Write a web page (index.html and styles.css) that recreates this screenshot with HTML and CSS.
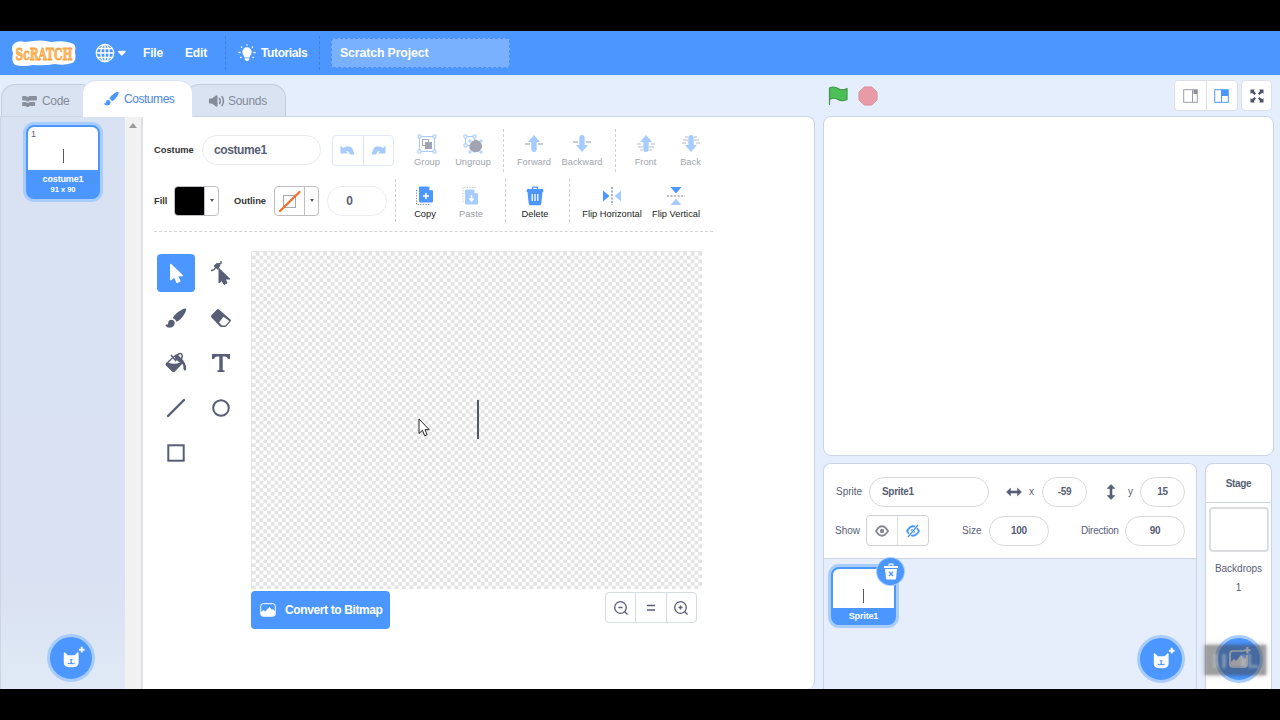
FILE: index.html
```html
<!DOCTYPE html>
<html lang="en">
<head>
<meta charset="utf-8">
<title>Scratch Project</title>
<link rel="stylesheet" href="styles.css">
</head>
<body>
<svg class="defs" width="0" height="0">
  <symbol id="cat" viewBox="0 0 28 28">
    <path fill="#fff" d="M6.800 9.300Q6.800 7.800 8 8.600L10.800 11.300H17.600L20.400 8.600Q21.600 7.800 21.600 9.300V18.500C21.600 21.800 19 23.300 14.200 23.300S6.800 21.800 6.800 18.500ZM23.800 2.800H25.700V4.800H27.600V6.700H25.700V8.600H23.800V6.700H21.900V4.800H23.800Z"/>
    <path d="M12.400 15.200H16L14.200 17Z" fill="#4c97ff"/>
    <path d="M14.200 16V18.500M10.700 18.800C11.700 20.200 13.700 20 14.200 18.500C14.700 20 16.700 20.200 17.700 18.800" fill="none" stroke="#4c97ff" stroke-width="1.100"/>
  </symbol>
  <symbol id="brush" viewBox="0 0 20 20">
    <path d="M19.300.7C20.400 1.800 18.600 5.400 15.900 8.700C14 11 11.600 12.800 10.300 13.100C9.900 11.400 8.600 10.100 7 9.700C7.400 8.200 9.500 5.800 12 3.900C15.200 1.500 18.400-.1 19.300.7ZM5.600 11.200C7.400 11.200 8.800 12.500 8.800 14.300C8.800 16.900 6.700 18.700 4 18.700C2.400 18.700.8 17.900.2 16.800C-.1 16.100.4 15.700 1 15.800C2 16 2.300 15.300 2.500 14.200C2.800 12.400 3.900 11.200 5.600 11.200Z"/>
  </symbol>
  <symbol id="pointer" viewBox="0 0 14 20"><path d="M1.500 1.500V16L5 13L7.500 18.500L10.200 17.200L7.900 12H12.500Z" stroke-width="1.300" stroke-linejoin="round"/></symbol>
</svg>
<div class="app">
  <header class="menu">
    <svg class="logo" width="66" height="28" viewBox="0 0 66 28">
      <path d="M4 4Q8 1 14 3Q31 0 40 3Q53 1 60 4Q66 5 64 13Q66 22 61 24Q53 27 44 25Q33 27 22 26Q12 28 4 26Q0 23 2 14Q-1 7 4 4Z" fill="#fff"/>
      <text class="logo-text" x="4.500" y="20.500" textLength="57" lengthAdjust="spacingAndGlyphs">ScRATCH</text>
    </svg>
    <svg class="globe" width="31" height="20" viewBox="0 0 31 20" fill="none" stroke="#fff" stroke-width="1.300"><circle cx="10" cy="10" r="8.700"/><ellipse cx="10" cy="10" rx="4.200" ry="8.700"/><path d="M10 1.500V18.500M1.500 10H18.500M3 5.500H17M3 14.500H17"/><path d="M23.500 8.500H30L26.800 12Z" fill="#fff" stroke-linejoin="round"/></svg>
    <span class="m-file">File</span><span class="m-edit">Edit</span>
    <div class="tutorials">
      <svg width="18" height="18" viewBox="0 0 18 18"><path fill="#fff" d="M9 3.300A4.700 4.700 0 0 1 13.700 8C13.700 10.200 12 11 11.500 13.500H6.500C6 11 4.300 10.200 4.300 8A4.700 4.700 0 0 1 9 3.300ZM6.700 14.200H11.300V15.600L10 17H8L6.700 15.600Z"/><path stroke="#fff" stroke-width="1.400" stroke-linecap="round" d="M9 .8V1M3.500 3L3.700 3.200M14.500 3L14.300 3.200M1 8.500H2M16 8.500H17M2.700 13.500L3 13.300M15.300 13.500L15 13.300"/></svg>
      <span>Tutorials</span>
    </div>
    <div class="project">Scratch Project</div>
  </header>

  <main class="body">
    <section class="left">
      <nav class="tabs">
        <div class="tab t-code"><svg width="16" height="12" viewBox="0 0 17 13"><path fill="#8a8f9c" d="M1 1H4L5 2H7L8 1H15Q16 1 16 2V5Q16 6 15 6H8L7 7H5L4 6H1Q0 6 0 5V2Q0 1 1 1ZM1 7.500H4L5 8.500H7L8 7.500H13Q14 7.500 14 8.500V11Q14 12 13 12H8L7 13H5L4 12H1Q0 12 0 11V8.500Q0 7.500 1 7.500Z"/></svg>Code</div>
        <div class="tab t-cost"><svg width="15" height="16" fill="#4c97ff"><use href="#brush"/></svg>Costumes</div>
        <div class="tab t-snd"><svg width="16" height="14" viewBox="0 0 16 14"><path fill="#858b98" d="M0 5Q0 4.500 1 4.500H3L7 1.500Q8.500.8 8.500 2.500V11.500Q8.500 13.200 7 12.500L3 9.500H1Q0 9.500 0 9Z"/><path d="M10.500 4.500Q12 7 10.500 9.500M13 2.500Q16 7 13 11.500" fill="none" stroke="#858b98" stroke-width="1.500" stroke-linecap="round"/></svg>Sounds</div>
      </nav>
      <div class="panel">
        <aside class="list">
          <div class="thumb costume-thumb"><div class="pic"><span class="num">1</span><i class="stroke"></i></div><b>costume1</b><small>91 x 90</small></div>
          <div class="fab"><svg width="28" height="28"><use href="#cat"/></svg></div>
        </aside>
        <div class="scroll"><i></i></div>
        <div class="editor">
          <div class="row row1">
            <span class="lbl">Costume</span>
            <div class="pill name">costume1</div>
            <div class="pair undo">
              <span><svg width="15" height="12" viewBox="0 0 15 12" fill="#a6cbff"><path d="M.5 1.500L3 4Q9 .5 12.500 4.500L14.500 10.500H9.500Q9.500 7 6 7L8 9.500H.5Z"/></svg></span>
              <span><svg width="15" height="12" viewBox="0 0 15 12" fill="#a6cbff"><path d="M14.500 1.500L12 4Q6 .5 2.500 4.500L.5 10.500H5.500Q5.500 7 9 7L7 9.500H14.500Z"/></svg></span>
            </div>
            <div class="tool off c-group"><svg width="20" height="20" viewBox="0 0 20 20" fill="#fff" stroke="#a6cbff"><rect x="2.500" y="2.500" width="15" height="15"/><path d="M1 1H4V4H1ZM16 1H19V4H16ZM1 16H4V19H1ZM16 16H19V19H16Z"/><rect x="5.500" y="5.500" width="6" height="6" stroke="#aaadb8"/><rect x="8.500" y="8.500" width="6" height="6" fill="#a0a3b1" stroke="#a0a3b1"/></svg>Group</div>
            <div class="tool off"><svg width="20" height="20" viewBox="0 0 20 20" fill="#fff" stroke="#a6cbff"><rect x="2.500" y="2.500" width="9" height="9"/><path d="M1 1H4V4H1ZM10 1H13V4H10ZM1 10H4V13H1Z"/><path d="M9 8L13 6L17 8L19 13L16 17L11 18L7 15L7 11Z" fill="#a0a3b1" stroke="#a0a3b1"/><path d="M6 6H8V8H6ZM17 6H19V8H17ZM6 17H8V19H6ZM17 17H19V19H17Z"/></svg>Ungroup</div>
            <i class="vline"></i>
            <div class="tool off c-fwd"><svg width="20" height="20" viewBox="0 0 20 20"><path d="M1 10H6M14 10H19" stroke="#b8bac4" stroke-width="1.400"/><path fill="#a6cbff" d="M10 1L16 8H12.700V15Q12.700 18 10 18T7.300 15V8H4Z"/></svg>Forward</div>
            <div class="tool off"><svg width="20" height="20" viewBox="0 0 20 20"><path d="M1 8H6M14 8H19" stroke="#b8bac4" stroke-width="1.400"/><path fill="#a6cbff" d="M10 18L16 11H12.700V4Q12.700 1 10 1T7.300 4V11H4Z"/></svg>Backward</div>
            <i class="vline v2"></i>
            <div class="tool off c-front"><svg width="20" height="20" viewBox="0 0 20 20"><path d="M1 10H5M15 10H19M2 13H7M13 13H18M4 16H7M13 16H16" stroke="#b8bac4"/><path fill="#a6cbff" d="M10 1L16 8H12.700V15Q12.700 18 10 18T7.300 15V8H4Z"/></svg>Front</div>
            <div class="tool off"><svg width="20" height="20" viewBox="0 0 20 20"><path d="M1 9H5M15 9H19M2 6H7M13 6H18M4 3H7M13 3H16" stroke="#b8bac4"/><path fill="#a6cbff" d="M10 18L16 11H12.700V4Q12.700 1 10 1T7.300 4V11H4Z"/></svg>Back</div>
          </div>
          <div class="row row2">
            <span class="lbl">Fill</span>
            <div class="swatch"><span class="color black"></span><span class="drop"></span></div>
            <span class="lbl outl">Outline</span>
            <div class="swatch"><span class="color"><svg width="29" height="28" viewBox="0 0 29 28"><rect x="8.500" y="8.500" width="12" height="12" fill="none" stroke="#a7a9b0"/><path d="M5 24L24.500 5" stroke="#f0702e" stroke-width="2.400" stroke-linecap="round"/></svg></span><span class="drop"></span></div>
            <div class="pill width">0</div>
            <i class="vline va"></i>
            <div class="tool c-copy"><svg width="20" height="20" viewBox="0 0 20 20"><path d="M1.500 4V18.500H16" fill="none" stroke="#8a94a8" stroke-dasharray="1.300 1.300"/><path fill="#4c97ff" d="M5 .5H13L18 5.500V15Q18 16.500 16.500 16.500H5.500Q4 16.500 4 15V1.500Q4 .5 5 .5Z"/><path d="M14 .5V4.500H18" fill="#fff" stroke="#4c97ff" stroke-width=".7"/><path stroke="#fff" stroke-width="1.600" d="M11 7V13M8 10H14"/></svg>Copy</div>
            <div class="tool off"><svg width="20" height="20" viewBox="0 0 20 20"><path d="M2 16V1.500H16" fill="none" stroke="#c4cad6" stroke-dasharray="1.300 1.300"/><path fill="#a6cbff" d="M5.500 3.500H12.500L17 8V17.500Q17 18.500 16 18.500H5Q4 18.500 4 17.500V4.500Q4 3.500 5.500 3.500Z"/><path d="M13 3.500V7.500H17" fill="#fff" stroke="#a6cbff" stroke-width=".7"/><path stroke="#fff" stroke-width="1.500" fill="none" d="M10.500 9V14.500M8.500 12.500L10.500 15L12.500 12.500"/></svg>Paste</div>
            <i class="vline vb"></i>
            <div class="tool c-del"><svg width="20" height="20" viewBox="0 0 20 20"><path fill="#4c97ff" d="M7 3V1.500Q7 .5 8 .5H12Q13 .5 13 1.500V3H17Q18.300 3 18.300 4V6H17.500L16.300 17.500Q16.200 19.300 14.800 19.300H5.200Q3.800 19.300 3.700 17.500L2.500 6H1.700V4Q1.700 3 3 3ZM8.300 3H11.700V1.800H8.300Z"/><path d="M7.200 8V15M10 8V15M12.800 8V15" stroke="#fff" stroke-width="1.300"/></svg>Delete</div>
            <i class="vline vc"></i>
            <div class="tool c-fh"><svg width="20" height="20" viewBox="0 0 20 20"><path fill="#4c97ff" d="M1 4.500V15.500L7.500 10Z"/><path fill="#a6cbff" d="M19 4.500V15.500L12.500 10Z"/><path d="M10 1V19" stroke="#777c8a" stroke-width="1.200" stroke-dasharray="2 1.500"/></svg>Flip Horizontal</div>
            <div class="tool c-fv"><svg width="20" height="20" viewBox="0 0 20 20"><path fill="#4c97ff" d="M4.500 1H15.500L10 7.500Z"/><path fill="#a6cbff" d="M4.500 19H15.500L10 12.500Z"/><path d="M1 10H19" stroke="#777c8a" stroke-width="1.200" stroke-dasharray="2 1.500"/></svg>Flip Vertical</div>
          </div>
          <div class="work">
            <div class="tools">
              <span class="on"><svg width="15" height="21" fill="#fff" stroke="#fff"><use href="#pointer"/></svg></span>
              <span><svg width="22" height="26" viewBox="0 0 22 26"><path d="M1 10.500Q4.500 10.500 5.500 7.500Q7 3.500 11 3.500V1" fill="none" stroke="#575e75" stroke-width="1.300"/><path d="M3.500 6L7 2.800L10.500 5L8 10Z" fill="#575e75"/><path d="M9 8.500V23L12 20.500L14 24.500L17 23L15.200 19H19.800Z" fill="#575e75" stroke="#575e75" stroke-linejoin="round"/></svg></span>
              <span><svg width="22" height="21"><use href="#brush"/></svg></span>
              <span><svg width="22" height="20" viewBox="0 0 22 20"><path d="M1.500 7L7 1.500Q8 .7 9 1.500L20.500 11.500Q21.500 12.500 20.500 13.500L16.500 18.300Q16 19 15 19H11.500Q10.500 19 9.500 18L1.500 9.500Q.5 8 1.500 7Z" fill="#575e75"/><path d="M13.500 8.800L19.300 13L15.500 17.500H12L9 14.500Z" fill="#fff"/></svg></span>
              <span><svg width="22" height="22" viewBox="0 0 22 22"><path d="M1 11Q0 12 1 13.500L7 19.500Q8.500 20.500 10 19.500L17 12Q18.500 12 18.500 17Q19.500 19.500 21 18Q22 14 18 8L13 3Q11.500 1.500 10 3Z" fill="#575e75"/><path d="M3.500 10.700L9.500 4.700L11.500 8L15 10.500Q9 13 3.500 10.700Z" fill="#fff"/><path d="M6 3L11 9M10.500 9Q12 1 15.500 1.500Q19 2 15.500 9" fill="none" stroke="#575e75" stroke-width="1.500"/></svg></span>
              <span><svg width="20" height="20" viewBox="0 0 20 20"><path fill="#575e75" d="M1 1H19V6H17Q16.500 3.500 14 3.500H11.700V16.800Q12 17.300 13.500 17.300V19H6.500V17.300Q8 17.300 8.300 16.800V3.500H6Q3.500 3.500 3 6H1Z"/></svg></span>
              <span><svg width="20" height="20" viewBox="0 0 20 20"><path d="M2 18L18 2" stroke="#575e75" stroke-width="2.400" stroke-linecap="round"/></svg></span>
              <span><svg width="20" height="20" viewBox="0 0 20 20"><circle cx="10" cy="10" r="7.800" fill="none" stroke="#575e75" stroke-width="2"/></svg></span>
              <span><svg width="20" height="20" viewBox="0 0 20 20"><rect x="2.300" y="2.300" width="15.400" height="15.400" fill="none" stroke="#575e75" stroke-width="2"/></svg></span>
            </div>
            <div class="canvas-col">
              <div class="canvas">
                <i class="drawn"></i>
                <svg class="mouse" width="12" height="20" viewBox="0 0 12 20"><path d="M1 1V15.500L4.400 12.400L6.800 17.800L9.200 16.700L7 11.700H11.300Z" fill="#fff" stroke="#222" stroke-width="1"/></svg>
              </div>
              <div class="foot">
                <div class="convert"><svg width="16" height="14" viewBox="0 0 16 14"><rect x=".7" y=".7" width="14.600" height="12.600" rx="2.500" fill="none" stroke="#fff" stroke-width="1"/><path d="M1 9L3.500 7L5 8.500L9.500 4L12 7L13 6L15 8.500V11Q15 13 13 13H3Q1 13 1 11Z" fill="#fff"/></svg><span>Convert to Bitmap</span></div>
                <div class="zoom">
                  <span><svg width="16" height="16" viewBox="0 0 16 16" fill="none" stroke="#575e75" stroke-width="1.300"><circle cx="7.500" cy="7.500" r="5.800"/><path d="M11.700 11.700L14.500 14.500M5.500 7.500H9.500"/></svg></span>
                  <span><svg width="16" height="16" viewBox="0 0 16 16"><path d="M4 5.500H12M4 10H12" stroke="#575e75" stroke-width="1.700"/></svg></span>
                  <span><svg width="16" height="16" viewBox="0 0 16 16" fill="none" stroke="#575e75" stroke-width="1.300"><circle cx="7.500" cy="7.500" r="5.800"/><path d="M11.700 11.700L14.500 14.500M5.500 7.500H9.500M7.500 5.500V9.500"/></svg></span>
                </div>
              </div>
            </div>
          </div>
        </div>
      </div>
    </section>

    <section class="right">
      <div class="controls">
        <svg width="20" height="20" viewBox="0 0 20 20"><path d="M1.500 19V2Q6-.2 10 2.500T19 2.500V13.500Q14 16 10 13.500T1.500 13.500" fill="#4cbf56" stroke="#3f9648" stroke-width="1.200" stroke-linejoin="round"/></svg>
        <svg class="stop" width="20" height="20" viewBox="0 0 20 20"><path d="M6.200 1H13.800L19 6.200V13.800L13.800 19H6.200L1 13.800V6.200Z" fill="#e99ba5" stroke="#d6909c"/></svg>
        <div class="pair size">
          <span><svg width="15" height="14" viewBox="0 0 15 14"><rect x=".7" y=".7" width="13.600" height="12.600" fill="#fff" stroke="#9a9da6"/><path d="M9.500 1V13" stroke="#9a9da6"/><path d="M10.500 1H14V5H10.500Z" fill="#8b8f99"/></svg></span>
          <span><svg width="15" height="14" viewBox="0 0 15 14"><rect x=".7" y=".7" width="13.600" height="12.600" fill="#fff" stroke="#4c97ff"/><path d="M7.500 1V13" stroke="#4c97ff"/><path d="M7.500 1H14V7H7.500Z" fill="#4c97ff"/></svg></span>
        </div>
        <div class="full"><svg width="14" height="14" viewBox="0 0 14 14"><path d="M.5.500H5L3.800 1.800L6 4.500L4.500 6L1.800 3.800L.5 5ZM13.500.5V5L12.200 3.800L9.500 6L8 4.500L10.200 1.800L9 .5ZM.5 13.500V9L1.800 10.200L4.500 8L6 9.500L3.800 12.200L5 13.500ZM13.500 13.500H9L10.200 12.200L8 9.500L9.500 8L12.200 10.200L13.500 9Z" fill="#4d536a"/></svg></div>
      </div>
      <div class="stage"></div>
      <div class="bottom">
        <div class="sprites">
          <div class="info">
            <div class="irow">
              <span class="w33">Sprite</span><div class="pill sname">Sprite1</div>
              <svg class="ax" width="16" height="10" viewBox="0 0 16 10"><path d="M.5 5L4.500 1.200V4H11.500V1.200L15.500 5L11.500 8.800V6H4.500V8.800Z" fill="#575e75" stroke="#575e75" stroke-width=".6" stroke-linejoin="round"/></svg>
              <span class="xl">x</span><div class="pill s45">-59</div>
              <svg class="ay" width="10" height="16" viewBox="0 0 10 16"><path d="M5 .5L1.200 4.500H4V11.500H1.200L5 15.500L8.800 11.500H6V4.500H8.800Z" fill="#575e75" stroke="#575e75" stroke-width=".6" stroke-linejoin="round"/></svg>
              <span class="yl">y</span><div class="pill s45">15</div>
            </div>
            <div class="irow second">
              <span class="w31">Show</span>
              <div class="pair eyes">
                <span><svg width="16" height="14" viewBox="0 0 16 14"><path d="M2 7Q8-2.500 14 7Q8 16.500 2 7Z" fill="none" stroke="#858994" stroke-width="1.800"/><circle cx="8" cy="7" r="2.200" fill="#858994"/></svg></span>
                <span><svg width="16" height="14" viewBox="0 0 16 14"><path d="M2 7Q8-2.500 14 7Q8 16.500 2 7Z" fill="none" stroke="#4c97ff" stroke-width="1.800"/><circle cx="8" cy="7" r="2.200" fill="#4c97ff"/><path d="M3 13L13 1" stroke="#fff" stroke-width="2.600"/><path d="M3 13L13 1" stroke="#4c97ff" stroke-width="1.300"/></svg></span>
              </div>
              <span class="szl">Size</span><div class="pill s60">100</div>
              <span class="dl">Direction</span><div class="pill s60">90</div>
            </div>
          </div>
          <div class="zone">
            <div class="thumb sprite-thumb"><div class="pic"><i class="stroke"></i></div><b>Sprite1</b>
              <div class="trash"><svg width="16" height="18" viewBox="0 0 16 18"><path fill="#fff" d="M5.500 3V1.500Q5.500.5 6.500.5H9.500Q10.500.5 10.500 1.500V3H15V5H1V3ZM2 6H14L13 15.500Q13 16.500 12 16.500H4Q3 16.500 3 15.500ZM6.500 3H9.500V1.700H6.500Z"/><path d="M6 8.700L10 13M10 8.700L6 13" stroke="#4c97ff" stroke-width="1.300"/></svg></div>
            </div>
            <div class="fab"><svg width="28" height="28"><use href="#cat"/></svg></div>
          </div>
        </div>
        <div class="stagesel">
          <div class="shead">Stage</div>
          <div class="backdrop"></div>
          <span>Backdrops</span><span class="cnt">1</span>
          <div class="fab"><svg width="24" height="24" viewBox="0 0 24 24"><path d="M17 4H6Q3 4 3 7V17Q3 20 6 20H17Q20 20 20 17V8" fill="none" stroke="#fff" stroke-width="1.700"/><path d="M4 15L7 12L9 14L14 8L17 12L19 11V17Q19 19 17 19H6Q4 19 4 17ZM19.400 0H21.500V2.200H23.500V4.300H21.500V6.500H19.400V4.300H17.200V2.200H19.400Z" fill="#fff"/></svg></div>
          <div class="mark"><i class="m1"></i><i class="m2"></i><i class="m3"></i><i class="m4"></i><i class="m5"></i></div>
        </div>
      </div>
    </section>
  </main>
</div>
</body>
</html>
```
FILE: styles.css
```css
* { box-sizing: border-box; }
body { margin: 0; background: #000; font-family: "Liberation Sans", Arial, sans-serif; color: #575e75; }
svg { display: block; flex: none; }
.defs { position: absolute; }
.app { width: 1280px; height: 720px; padding: 31px 0; display: flex; flex-direction: column; overflow: hidden; }
.menu { height: 44px; flex: none; background: #4c97ff; display: flex; align-items: center; color: #fff; font-weight: bold; font-size: 12px; letter-spacing: -.15px; padding: 0 0 1px 11px; }
.logo { overflow: visible; }
.logo-text { font: bold 17px "DejaVu Serif", serif; letter-spacing: 0; fill: #ffb95c; stroke: #f3a33f; stroke-width: .8px; }
.globe { margin-left: 18px; }
.m-file { margin-left: 17px; width: 42px; }
.m-edit { width: 40px; }
.tutorials { display: flex; align-items: center; gap: 5px; width: 95px; height: 34px; padding-left: 12px; border-left: 1px dashed #407fdc; border-right: 1px dashed #407fdc; letter-spacing: -.38px; }
.project { margin: 1px 0 0 11px; width: 179px; height: 30px; line-height: 28px; padding-left: 8px; border: 1px dashed #4f8fe9; border-radius: 4px; background: #7ab1ff; font-size: 12.300px; letter-spacing: -.12px; }
.body { flex: none; height: 614px; display: flex; background: #e5eefd; }
.left { width: 815px; height: 614px; display: flex; flex-direction: column; }
.tabs { display: flex; align-items: flex-end; height: 42px; padding-left: 1px; flex: none; }
.tab { display: flex; align-items: center; height: 33px; font-size: 12px; letter-spacing: -.3px; color: #858b98; background: #d9e3f2; border: 1px solid #c3cddd; border-bottom: 0; border-radius: 14px 14px 0 0; }
.t-code { width: 94px; padding-left: 20px; gap: 4px; }
.t-cost { width: 111px; height: 37px; margin: 0 -8px 0 -13px; padding-left: 21px; gap: 5px; background: #fff; color: #4c87dd; z-index: 1; border-color: #dbe3ef; letter-spacing: -.45px; }
.t-snd { width: 101px; padding-left: 23px; gap: 3px; }
.panel { flex: 1; display: flex; border: 1px solid #cdd5e1; border-bottom: 0; border-radius: 0 8px 8px 0; background: #fff; overflow: hidden; margin-top: -1px; }
.list { width: 124px; background: linear-gradient(#d9e2f2 0, #d9e1f2 80%, #e0e9f5); display: flex; flex-direction: column; justify-content: space-between; padding: 8px 0 7px 25px; }
.scroll { width: 18px; background: #f1f1f1; border-right: 2px solid #dde1e6; padding: 6px 0 0 4px; }
.scroll i { display: block; width: 7px; border: 4px solid transparent; border-top: 0; border-bottom: 5px solid #9a9a9a; }
.thumb { display: flex; flex-direction: column; align-items: center; background: #4c97ff; border: 2px solid #4c97ff; border-radius: 8px; box-shadow: 0 0 0 3px #a8cdfd; color: #fff; }
.costume-thumb { width: 74px; height: 74px; }
.pic { background: #fff; position: relative; width: 100%; border-radius: 6px 6px 0 0; }
.costume-thumb .pic { height: 43px; }
.thumb b { font-size: 9px; line-height: 11px; margin-top: 4px; letter-spacing: -.15px; }
.thumb small { font-size: 7.500px; font-weight: bold; line-height: 10px; }
.num { position: absolute; left: 3px; top: 2px; font-size: 9px; color: #575e75; }
.stroke { position: absolute; left: 35px; top: 22px; width: 1px; height: 14px; background: #55585f; }
.fab { width: 48px; height: 48px; border-radius: 50%; background: #4c97ff; border: 3px solid #a8cdfd; display: flex; align-items: center; justify-content: center; flex: none; }
.list .fab { margin-left: 21px; }
.editor { width: 671px; padding: 11px 0 0 11px; color: #222; }
.row { display: flex; align-items: center; width: 559px; font-size: 9.300px; }
.row1 { height: 44px; }
.row2 { height: 60px; border-bottom: 1px dashed #d4d4d8; padding-bottom: 2px; }
.lbl { font-weight: bold; color: #333; flex: none; }
.row1 .lbl { width: 48px; }
.row2 .lbl { width: 20px; }
.row2 .outl { width: 40px; margin-left: 15px; }
.pill { height: 30px; border: 1px solid #d9d9dd; border-radius: 15px; background: #fff; color: #575e75; display: flex; align-items: center; justify-content: center; font-weight: bold; font-size: 10px; letter-spacing: -.3px; flex: none; }
.name { width: 119px; justify-content: flex-start; padding-left: 11px; font-size: 12px; letter-spacing: -.4px; border-color: #e7e9ef; }
.width { width: 60px; margin-left: 8px; padding-right: 15px; font-size: 12px; border-color: #eceef3; }
.pair { display: flex; border: 1px solid #dcdfe6; border-radius: 4px; background: #fff; height: 31px; flex: none; }
.pair span { flex: 1; display: flex; align-items: center; justify-content: center; }
.pair span + span { border-left: 1px solid #dcdfe6; }
.undo { width: 62px; margin-left: 11px; border-color: #e1e9f5; }
.tool { display: flex; flex-direction: column; align-items: center; gap: 2px; line-height: 12px; width: 46px; flex: none; white-space: nowrap; color: #222; padding-top: 2px; }
.row2 .tool { gap: 2px; padding-top: 5px; }
.off { color: #a2a5ad; }
.row2 .off { color: #999ca5; }
.c-group { margin-left: 10px; }
.vline { height: 43px; border-left: 1px dashed #cfd1d6; margin-left: 7px; flex: none; }
.c-fwd { margin-left: 6px; }
.c-fwd, .c-fwd + .tool { width: 48px; }
.v2 { margin-left: 9px; }
.c-front { margin-left: 7px; }
.c-front, .c-front + .tool { width: 45px; }
.swatch { width: 45px; height: 30px; border: 1px solid #bdbdc2; border-radius: 4px; display: flex; overflow: hidden; flex: none; }
.color { width: 30px; border-right: 1px solid #bdbdc2; }
.black { background: #000; }
.drop { flex: 1; display: flex; align-items: center; justify-content: center; }
.drop::before { content: ""; border: 2px solid transparent; border-top: 3px solid #555; border-bottom: 0; }
.va { margin-left: 8px; }
.c-copy { margin-left: 6px; }
.vb { margin-left: 11px; }
.c-del { margin-left: 6px; }
.vc { margin-left: 11px; }
.c-fh { width: 64px; margin-left: 10px; }
.c-fv { width: 64px; }
.work { display: flex; padding: 19px 0 0 3px; }
.tools { display: grid; grid-template-columns: 38px 38px; gap: 7px; padding-top: 3px; align-content: start; width: 94px; }
.tools span { height: 38px; display: flex; align-items: center; justify-content: center; border-radius: 4px; fill: #575e75; }
.tools .on { background: #4c97ff; fill: #fff; }
.canvas { position: relative; width: 451px; height: 338px; border: 1px solid #e6e6e6; border-width: 1px 0 0 1px; background: repeating-conic-gradient(#e3e3e3 0 25%, #fff 0 50%) 0 0 / 7.500px 7.500px; }
.drawn { position: absolute; left: 225px; top: 148px; width: 2px; height: 39px; background: #50566b; }
.mouse { position: absolute; left: 166px; top: 166px; }
.foot { display: flex; justify-content: space-between; width: 446px; padding-top: 2px; }
.convert { width: 139px; height: 38px; border-radius: 4px; background: #4c97ff; color: #fff; font-weight: bold; font-size: 12px; letter-spacing: -.38px; display: flex; align-items: center; gap: 9px; padding-left: 9px; white-space: nowrap; }
.zoom { display: flex; width: 92px; height: 31px; border: 1px solid #d6dde1; border-radius: 4px; margin-top: 1px; }
.zoom span { flex: 1; display: flex; align-items: center; justify-content: center; }
.zoom span + span { border-left: 1px solid #d6dde1; }
.right { margin-left: 8px; width: 451px; display: flex; flex-direction: column; }
.controls { display: flex; align-items: center; height: 41px; padding-left: 5px; flex: none; }
.stop { margin-left: 10px; }
.size { width: 64px; margin-left: 296px; }
.full { width: 31px; height: 31px; margin-left: 3px; border: 1px solid #dcdfe6; border-radius: 4px; background: #fff; display: flex; align-items: center; justify-content: center; }
.stage { height: 340px; border: 1px solid #cbd4e2; border-radius: 8px; background: #fff; flex: none; }
.bottom { flex: 1; display: flex; gap: 8px; margin-top: 7px; }
.sprites { width: 374px; border: 1px solid #cbd4e2; border-bottom: 0; border-radius: 8px 8px 0 0; overflow: hidden; display: flex; flex-direction: column; }
.info { height: 95px; background: #fff; border-bottom: 1px solid #cbd4e2; padding: 12px 0 0 11px; font-size: 10px; }
.irow { display: flex; align-items: center; height: 31px; }
.second { margin-top: 8px; }
.w33 { width: 34px; padding-left: 1px; }
.w31 { width: 31px; }
.sname { width: 120px; justify-content: flex-start; padding-left: 12px; }
.ax { margin-left: 17px; }
.xl { margin-left: 7px; width: 13px; }
.s45 { width: 45px; }
.ay { margin-left: 19px; }
.yl { margin-left: 12px; width: 12px; }
.eyes { width: 63px; border-color: #cfd2da; }
.szl { margin-left: 33px; width: 27px; }
.s60 { width: 60px; }
.dl { margin-left: 31px; width: 45px; padding-left: 1px; white-space: nowrap; letter-spacing: -.2px; }
.zone { flex: 1; display: flex; justify-content: space-between; background: #e7eefb; padding: 8px 11px 6px 8px; }
.sprite-thumb { width: 65px; height: 58px; position: relative; margin-left: -1px; }
.sprite-thumb .pic { height: 39px; }
.sprite-thumb .stroke { left: 30px; top: 20px; }
.sprite-thumb b { margin-top: 3px; }
.trash { position: absolute; left: 44px; top: -11px; width: 27px; height: 27px; border-radius: 50%; background: #4c97ff; display: flex; align-items: center; justify-content: center; box-shadow: 0 0 0 1px #a8cdfd; }
.zone .fab { align-self: flex-end; }
.stagesel { width: 67px; background: #fff; border: 1px solid #cbd4e2; border-bottom: 0; border-radius: 8px 8px 0 0; display: flex; flex-direction: column; align-items: center; font-size: 10px; position: relative; }
.shead { height: 39px; line-height: 39px; width: 100%; text-align: center; border-bottom: 1px solid #cbd4e2; font-weight: bold; letter-spacing: -.3px; flex: none; }
.backdrop { width: 60px; height: 45px; margin: 4px 0 11px; border: 2px solid #dcdde1; border-radius: 4px; flex: none; }
.stagesel .cnt { margin-top: 8px; }
.stagesel .fab { margin: auto 0 6px; }
.mark { position: absolute; left: -1px; top: 181px; width: 61px; height: 30px; background: rgba(62, 62, 66, .5); box-shadow: 0 0 5px rgba(50, 50, 60, .35); filter: blur(.8px); }
.mark i { position: absolute; background: rgba(190, 195, 205, .45); }
.m1 { left: 8px; top: 9px; width: 5px; height: 14px; }
.m2 { left: 17px; top: 9px; width: 4px; height: 14px; }
.m3 { left: 36px; top: 10px; width: 5px; height: 12px; }
.m4 { left: 43px; top: 20px; width: 10px; height: 3px; }
.m5 { left: 43px; top: 9px; width: 3px; height: 11px; }
```
